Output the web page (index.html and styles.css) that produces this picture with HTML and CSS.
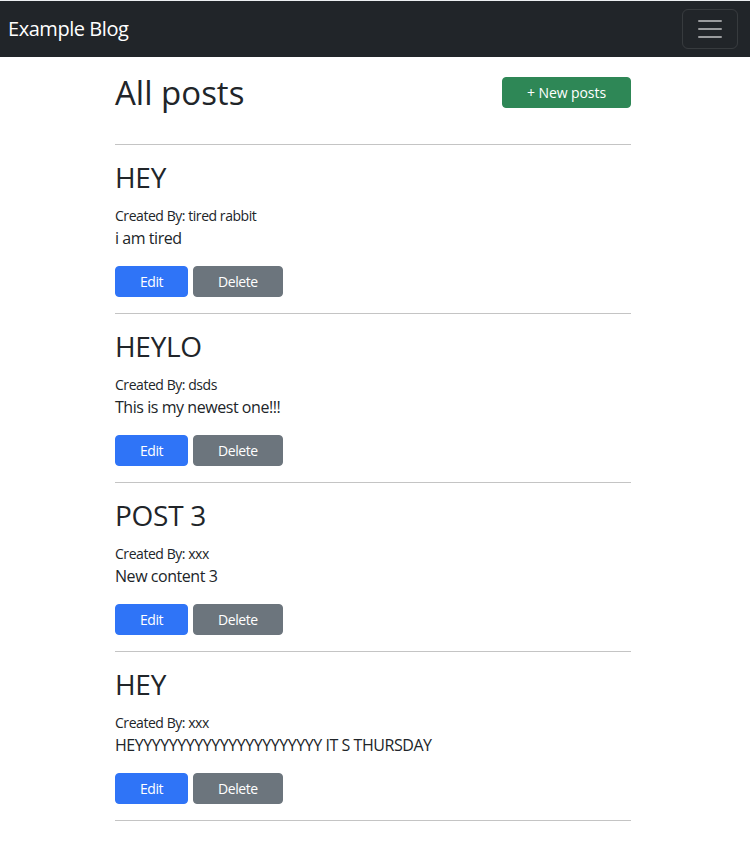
FILE: index.html
```html
<!DOCTYPE html>
<html lang="en">
<head>
<meta charset="utf-8">
<title>Example Blog</title>
<link rel="stylesheet" href="styles.css">
</head>
<body>
<nav class="navbar">
  <a class="brand" href="#">Example Blog</a>
  <button class="toggler" type="button" aria-label="Toggle navigation">
    <svg class="toggler-icon" viewBox="0 0 30 30" width="30" height="30" aria-hidden="true">
      <path d="M4 7h22M4 15h22M4 23h22" stroke="rgba(255,255,255,0.55)" stroke-width="2" stroke-linecap="round" fill="none"/>
    </svg>
  </button>
</nav>
<main class="container">
  <div class="page-head">
    <h1 class="page-title">All posts</h1>
    <a class="btn btn-success" href="#">+ New posts</a>
  </div>
  <hr class="divider">
  <article class="post">
    <h2 class="post-title">HEY</h2>
    <div class="post-meta">Created By: tired rabbit</div>
    <p class="post-body">i am tired</p>
    <div class="post-actions">
      <a class="btn btn-primary" href="#">Edit</a>
      <a class="btn btn-secondary" href="#">Delete</a>
    </div>
  </article>
  <hr class="divider">
  <article class="post">
    <h2 class="post-title">HEYLO</h2>
    <div class="post-meta">Created By: dsds</div>
    <p class="post-body">This is my newest one!!!</p>
    <div class="post-actions">
      <a class="btn btn-primary" href="#">Edit</a>
      <a class="btn btn-secondary" href="#">Delete</a>
    </div>
  </article>
  <hr class="divider">
  <article class="post">
    <h2 class="post-title">POST 3</h2>
    <div class="post-meta">Created By: xxx</div>
    <p class="post-body">New content 3</p>
    <div class="post-actions">
      <a class="btn btn-primary" href="#">Edit</a>
      <a class="btn btn-secondary" href="#">Delete</a>
    </div>
  </article>
  <hr class="divider">
  <article class="post">
    <h2 class="post-title">HEY</h2>
    <div class="post-meta">Created By: xxx</div>
    <p class="post-body">HEYYYYYYYYYYYYYYYYYYYYYY IT S THURSDAY</p>
    <div class="post-actions">
      <a class="btn btn-primary" href="#">Edit</a>
      <a class="btn btn-secondary" href="#">Delete</a>
    </div>
  </article>
  <hr class="divider">
</main>
</body>
</html>
```
FILE: styles.css
```css
* { box-sizing: border-box; }

html, body {
  margin: 0;
  background: #fff;
}

body {
  border-top: 1px solid #eceff1;
  font-family: "Segoe UI", "Open Sans", "Noto Sans", sans-serif;
  font-size: 16px;
  line-height: 1.5;
  color: #212529;
  letter-spacing: -0.028em;
}

.navbar {
  display: flex;
  align-items: center;
  justify-content: space-between;
  height: 56px;
  padding: 0 12px 0 8px;
  background: #212529;
}

.brand {
  color: #fff;
  font-size: 20px;
  line-height: 30px;
  text-decoration: none;
}

.toggler {
  display: flex;
  align-items: center;
  justify-content: center;
  width: 56px;
  height: 40px;
  padding: 4px 12px;
  background: transparent;
  border: 1px solid rgba(255, 255, 255, 0.1);
  border-radius: 6px;
}

.toggler-icon { display: block; }

.container {
  width: 516px;
  margin-left: 115px;
  padding-top: 16px;
}

.page-head {
  display: flex;
  align-items: center;
  justify-content: space-between;
  padding-bottom: 15px;
}

.page-title {
  margin: 0;
  font-size: 33px;
  font-weight: 400;
  line-height: 1.2;
  letter-spacing: 0;
}

.divider {
  margin: 16px 0;
  border: 0;
  border-top: 1px solid #c4c4c4;
}

.post-title {
  margin: 0 0 11px;
  font-size: 28px;
  font-weight: 400;
  line-height: 33px;
  letter-spacing: -0.01em;
}

.post-meta {
  font-size: 14px;
  line-height: 21px;
}

.post-body {
  margin: 0 0 16px;
  font-size: 16px;
  line-height: 24px;
}

.post-actions {
  display: flex;
  gap: 5px;
}

.btn {
  display: inline-block;
  padding: 4px 24px;
  font-size: 14px;
  line-height: 21px;
  border: 1px solid transparent;
  border-radius: 4px;
  color: #fff;
  text-decoration: none;
  text-align: center;
}

.btn-success {
  background: #2e8756;
  border-color: #2e8756;
  letter-spacing: -0.005em;
}
.btn-primary { background: #2f74f7; border-color: #2f74f7; }
.btn-secondary { background: #6c757d; border-color: #6c757d; }
```
